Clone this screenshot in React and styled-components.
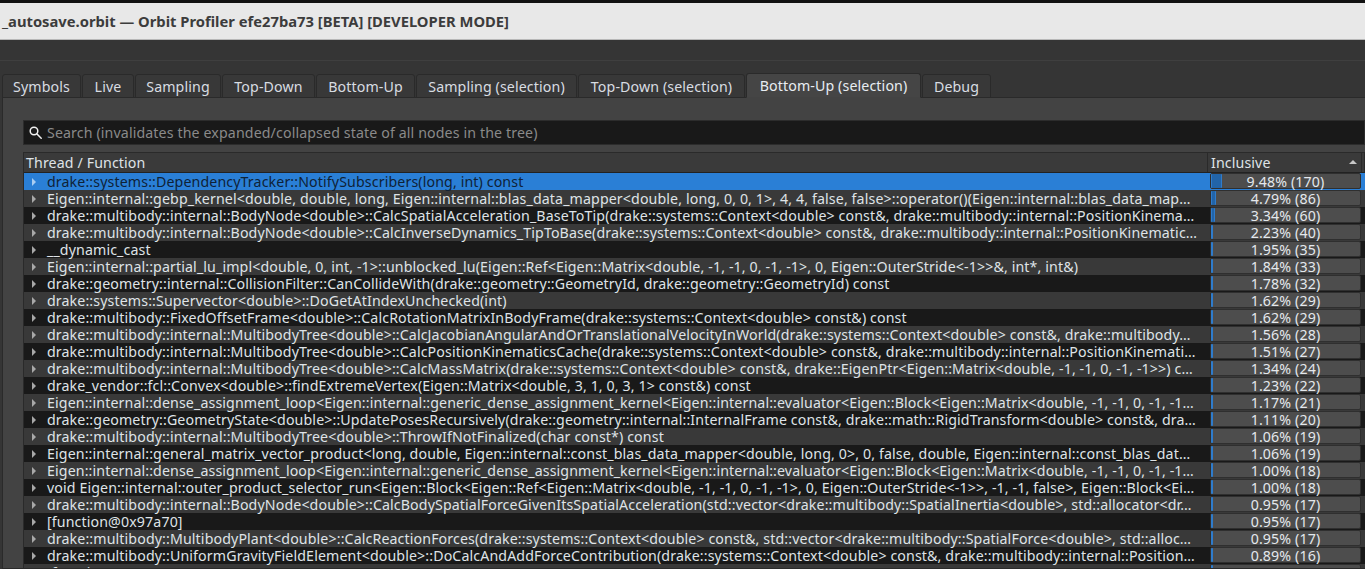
import React from "react";
import styled, { createGlobalStyle } from "styled-components";

const rows = [
  ["drake::systems::DependencyTracker::NotifySubscribers(long, int) const", "9.48% (170)", 9.48],
  ["Eigen::internal::gebp_kernel<double, double, long, Eigen::internal::blas_data_mapper<double, long, 0, 0, 1>, 4, 4, false, false>::operator()(Eigen::internal::blas_data_map…", "4.79% (86)", 4.79],
  ["drake::multibody::internal::BodyNode<double>::CalcSpatialAcceleration_BaseToTip(drake::systems::Context<double> const&, drake::multibody::internal::PositionKinema…", "3.34% (60)", 3.34],
  ["drake::multibody::internal::BodyNode<double>::CalcInverseDynamics_TipToBase(drake::systems::Context<double> const&, drake::multibody::internal::PositionKinematic…", "2.23% (40)", 2.23],
  ["__dynamic_cast", "1.95% (35)", 1.95],
  ["Eigen::internal::partial_lu_impl<double, 0, int, -1>::unblocked_lu(Eigen::Ref<Eigen::Matrix<double, -1, -1, 0, -1, -1>, 0, Eigen::OuterStride<-1>>&, int*, int&)", "1.84% (33)", 1.84],
  ["drake::geometry::internal::CollisionFilter::CanCollideWith(drake::geometry::GeometryId, drake::geometry::GeometryId) const", "1.78% (32)", 1.78],
  ["drake::systems::Supervector<double>::DoGetAtIndexUnchecked(int)", "1.62% (29)", 1.62],
  ["drake::multibody::FixedOffsetFrame<double>::CalcRotationMatrixInBodyFrame(drake::systems::Context<double> const&) const", "1.62% (29)", 1.62],
  ["drake::multibody::internal::MultibodyTree<double>::CalcJacobianAngularAndOrTranslationalVelocityInWorld(drake::systems::Context<double> const&, drake::multibody…", "1.56% (28)", 1.56],
  ["drake::multibody::internal::MultibodyTree<double>::CalcPositionKinematicsCache(drake::systems::Context<double> const&, drake::multibody::internal::PositionKinemati…", "1.51% (27)", 1.51],
  ["drake::multibody::internal::MultibodyTree<double>::CalcMassMatrix(drake::systems::Context<double> const&, drake::EigenPtr<Eigen::Matrix<double, -1, -1, 0, -1, -1>>) c…", "1.34% (24)", 1.34],
  ["drake_vendor::fcl::Convex<double>::findExtremeVertex(Eigen::Matrix<double, 3, 1, 0, 3, 1> const&) const", "1.23% (22)", 1.23],
  ["Eigen::internal::dense_assignment_loop<Eigen::internal::generic_dense_assignment_kernel<Eigen::internal::evaluator<Eigen::Block<Eigen::Matrix<double, -1, -1, 0, -1, -1…", "1.17% (21)", 1.17],
  ["drake::geometry::GeometryState<double>::UpdatePosesRecursively(drake::geometry::internal::InternalFrame const&, drake::math::RigidTransform<double> const&, dra…", "1.11% (20)", 1.11],
  ["drake::multibody::internal::MultibodyTree<double>::ThrowIfNotFinalized(char const*) const", "1.06% (19)", 1.06],
  ["Eigen::internal::general_matrix_vector_product<long, double, Eigen::internal::const_blas_data_mapper<double, long, 0>, 0, false, double, Eigen::internal::const_blas_dat…", "1.06% (19)", 1.06],
  ["Eigen::internal::dense_assignment_loop<Eigen::internal::generic_dense_assignment_kernel<Eigen::internal::evaluator<Eigen::Block<Eigen::Matrix<double, -1, -1, 0, -1, -1…", "1.00% (18)", 1.0],
  ["void Eigen::internal::outer_product_selector_run<Eigen::Block<Eigen::Ref<Eigen::Matrix<double, -1, -1, 0, -1, -1>, 0, Eigen::OuterStride<-1>>, -1, -1, false>, Eigen::Block<Ei…", "1.00% (18)", 1.0],
  ["drake::multibody::internal::BodyNode<double>::CalcBodySpatialForceGivenItsSpatialAcceleration(std::vector<drake::multibody::SpatialInertia<double>, std::allocator<dr…", "0.95% (17)", 0.95],
  ["[function@0x97a70]", "0.95% (17)", 0.95],
  ["drake::multibody::MultibodyPlant<double>::CalcReactionForces(drake::systems::Context<double> const&, std::vector<drake::multibody::SpatialForce<double>, std::alloc…", "0.95% (17)", 0.95],
  ["drake::multibody::UniformGravityFieldElement<double>::DoCalcAndAddForceContribution(drake::systems::Context<double> const&, drake::multibody::internal::Position…", "0.89% (16)", 0.89],
  ["[function@0x9c840]", "0.84% (15)", 0.84],
];

const tabs = [
  ["Symbols", 79],
  ["Live", 52],
  ["Sampling", 86],
  ["Top-Down", 93],
  ["Bottom-Up", 99],
  ["Sampling (selection)", 161],
  ["Top-Down (selection)", 167],
  ["Bottom-Up (selection)", 175],
  ["Debug", 69],
];

const GlobalStyle = createGlobalStyle`
  *, *::before, *::after {
    box-sizing: border-box;
  }
  html, body {
    margin: 0;
    height: 100%;
    overflow: hidden;
    background: #353535;
  }
  body {
    font-family: "Noto Sans", "Open Sans", sans-serif;
    font-size: 14.2px;
    letter-spacing: 0.12px;
  }
`;

const Window = styled.div`
  height: 569px;
  display: flex;
  flex-direction: column;
  overflow: hidden;
  border-top: 3px solid #111;
`;

const TitleBar = styled.header`
  height: 37px;
  flex: none;
  display: flex;
  align-items: center;
  padding-left: 2px;
  background: #e8e8e8;
  border-bottom: 1px solid #b8b8b8;
  color: #3c3c3c;
  font-size: 14.75px;
  font-weight: 700;
  letter-spacing: 0;
  white-space: nowrap;
`;

const MenuBar = styled.div`
  height: 21px;
  flex: none;
  background: #353535;
  border-bottom: 1px solid #3f3f3f;
`;

const TabArea = styled.div`
  flex: 1;
  min-height: 0;
  display: flex;
  flex-direction: column;
  padding: 12px 0 0 2px;
`;

const TabStrip = styled.div`
  height: 25px;
  flex: none;
  display: flex;
  align-items: flex-end;
  gap: 1px;
  position: relative;
  z-index: 1;
  margin-bottom: -1px;
`;

const Tab = styled.div`
  width: ${(p) => p.$width}px;
  height: ${(p) => (p.$active ? 25 : 24)}px;
  padding-top: ${(p) => (p.$active ? 0 : 1)}px;
  display: flex;
  align-items: center;
  justify-content: center;
  color: ${(p) => (p.$active ? "#e8edf2" : "#d8dde2")};
  background: ${(p) => (p.$active ? "#454545" : "#383838")};
  border: 1px solid #2a2a2a;
  border-bottom: 1px solid ${(p) => (p.$active ? "#434343" : "#2a2a2a")};
  border-radius: 3px 3px 0 0;
  white-space: nowrap;
`;

const Pane = styled.main`
  flex: 1;
  min-height: 0;
  display: flex;
  flex-direction: column;
  gap: 7px;
  background: #434343;
  border: 1px solid #2a2a2a;
  border-right: 0;
  padding: 22px 0 0 20px;
  overflow: hidden;
`;

const SearchBox = styled.div`
  height: 25px;
  flex: none;
  display: flex;
  align-items: center;
  gap: 5px;
  padding-left: 5px;
  background: #191919;
  border: 1px solid #2c2c2c;
  color: #8a8a8a;
  white-space: nowrap;
`;

const Table = styled.div`
  flex: 1;
  min-height: 0;
  overflow: hidden;
  border-top: 1px solid #2a2a2a;
  border-left: 1px solid #2a2a2a;
`;

const HeaderRow = styled.div`
  height: 20px;
  display: grid;
  grid-template-columns: 1184px 154px 1fr;
  background: #3a3a3a;
  border-bottom: 1px solid #222;
`;

const HeaderCell = styled.div`
  position: relative;
  display: flex;
  align-items: center;
  min-width: 0;
  overflow: hidden;
  padding-left: ${(p) => p.$indent || 2}px;
  color: ${(p) => p.$color || "#dfe3e7"};
  border-right: 1px solid #2a2a2a;
`;

const SortArrow = styled.span`
  position: absolute;
  right: 4px;
  top: 7px;
  width: 0;
  height: 0;
  border-left: 4px solid transparent;
  border-right: 4px solid transparent;
  border-bottom: 4px solid #c8c8c8;
`;

const Row = styled.div`
  height: 17px;
  display: grid;
  grid-template-columns: 1184px 154px 1fr;
  grid-template-rows: 17px;
  line-height: 17px;
  background: ${(p) => (p.$selected ? "#2a7fd6" : p.$odd ? "#393939" : "#191919")};
`;

const NameCell = styled.div`
  display: flex;
  align-items: center;
  min-width: 0;
  color: ${(p) => (p.$selected ? "#0f2236" : "#dfe3e7")};
`;

const Expander = styled.span`
  flex: none;
  width: 0;
  height: 0;
  margin: 0 11px 0 8px;
  border-top: 4px solid transparent;
  border-bottom: 4px solid transparent;
  border-left: 4px solid ${(p) => (p.$selected ? "#a9cdf2" : "#a8a8a8")};
`;

const NameText = styled.span`
  margin-bottom: 1px;
  white-space: nowrap;
  min-width: 0;
`;

const BarCell = styled.div`
  position: relative;
  margin: 0 1px 1px 2px;
  display: flex;
  align-items: center;
  justify-content: center;
  background: #4d4d4d;
  border: 1px solid #2f2f2f;
  border-radius: 2px;
  color: #e4e8ec;
`;

const BarFill = styled.span`
  position: absolute;
  left: 0;
  top: 0;
  bottom: 0;
  min-width: 1px;
  background: #2264a8;
  border: 1px solid #2f7ccc;
  border-width: 0 1px 0 1px;
  border-radius: 1px;
`;

const BarLabel = styled.span`
  position: relative;
`;

function SearchIcon() {
  return (
    <svg width="13" height="13" viewBox="0 0 13 13" fill="none" stroke="#f0f0f0" strokeWidth="1.5">
      <circle cx="5" cy="5" r="3.8" />
      <path d="M8 8l4.2 4.2" strokeLinecap="round" />
    </svg>
  );
}

export default function App() {
  return (
    <>
      <GlobalStyle />
      <Window>
        <TitleBar>_autosave.orbit — Orbit Profiler efe27ba73 [BETA] [DEVELOPER MODE]</TitleBar>
        <MenuBar />
        <TabArea>
          <TabStrip>
            {tabs.map(([tab, width]) => (
              <Tab key={tab} $width={width} $active={tab === "Bottom-Up (selection)"}>
                {tab}
              </Tab>
            ))}
          </TabStrip>
          <Pane>
            <SearchBox>
              <SearchIcon />
              Search (invalidates the expanded/collapsed state of all nodes in the tree)
            </SearchBox>
            <Table>
              <HeaderRow>
                <HeaderCell>Thread / Function</HeaderCell>
                <HeaderCell $indent={3}>
                  Inclusive
                  <SortArrow />
                </HeaderCell>
                <HeaderCell $color="#8fc0f0">Exclusive</HeaderCell>
              </HeaderRow>
              {rows.map(([name, value, pct], i) => (
                <Row key={i} $selected={i === 0} $odd={i % 2 === 1}>
                  <NameCell $selected={i === 0}>
                    <Expander $selected={i === 0} />
                    <NameText>{name}</NameText>
                  </NameCell>
                  <BarCell>
                    <BarFill style={{ width: `${pct * 0.75}%` }} />
                    <BarLabel>{value}</BarLabel>
                  </BarCell>
                </Row>
              ))}
            </Table>
          </Pane>
        </TabArea>
      </Window>
    </>
  );
}
